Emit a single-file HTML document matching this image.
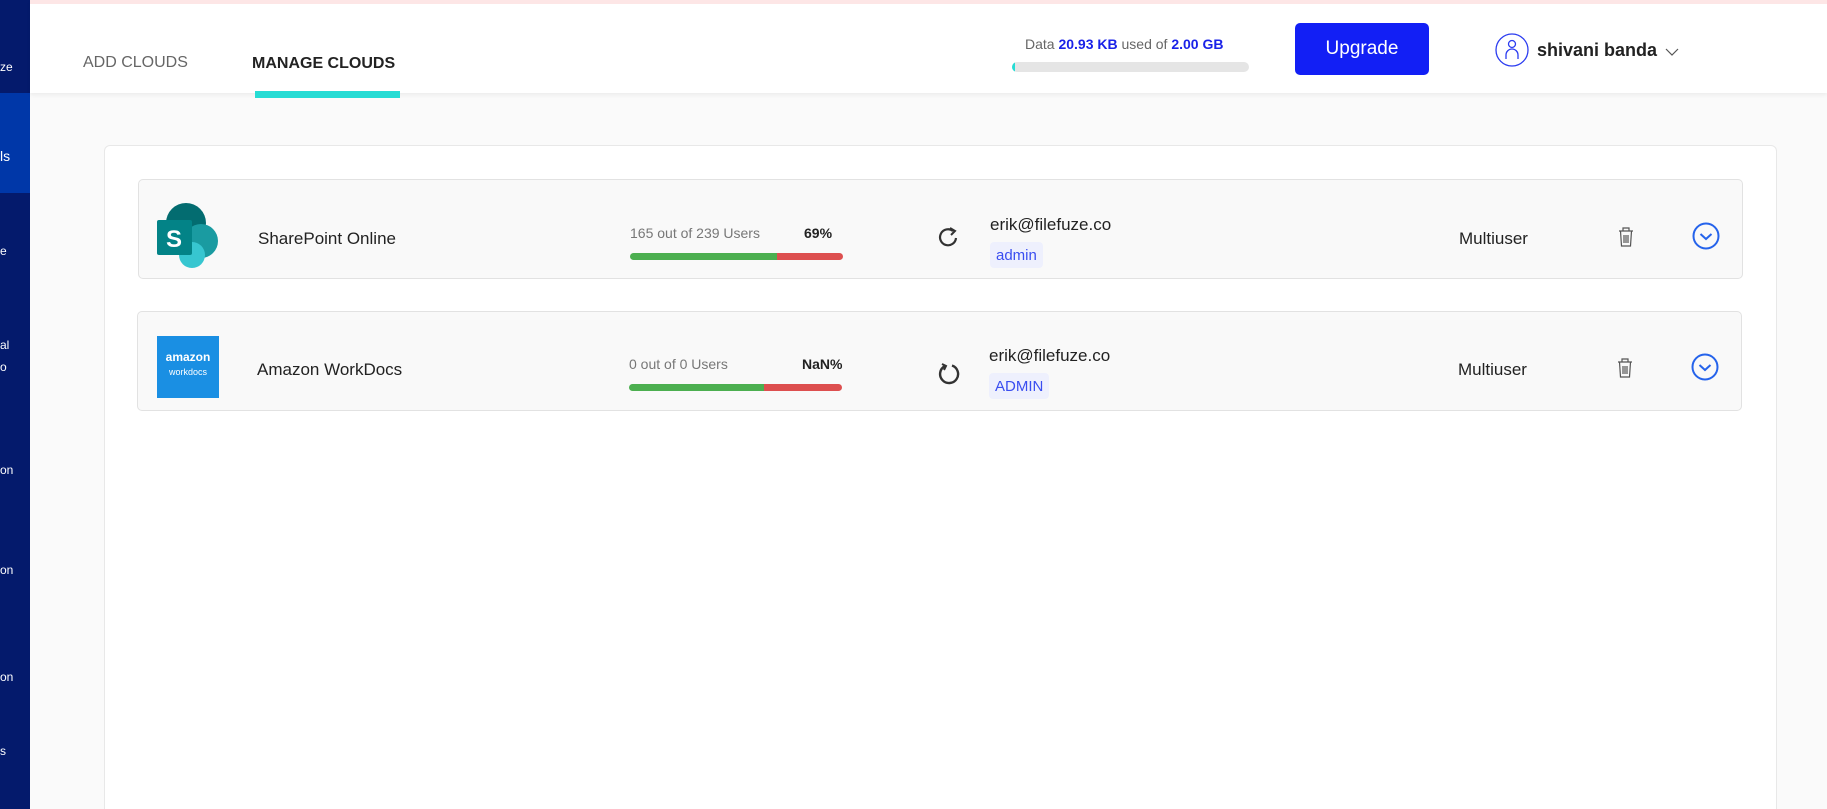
<!DOCTYPE html>
<html><head><meta charset="utf-8"><style>
*{margin:0;padding:0;box-sizing:border-box}
html{width:1827px;height:809px;overflow:hidden}
body{width:1827px;height:809px;overflow:hidden;background:#fafafa;font-family:"Liberation Sans",sans-serif;color:#222;position:relative}
.abs{position:absolute}
.side{left:0;top:0;width:30px;height:809px;background:#041a6c}
.hdr{left:30px;top:0;width:1797px;height:93px;background:#fff;border-top:4px solid #fde6e6;box-shadow:0 2px 4px rgba(0,0,0,.06)}
.row{background:#f9f9f9;border:1px solid #e2e2e2;border-radius:5px;width:1605px;height:100px}
.t{white-space:nowrap}
.bar{height:7px;border-radius:4px;overflow:hidden;display:flex}
.badge{background:#eef0fd;color:#3a4ef0;border-radius:4px;font-size:15px;padding:5px 6px;height:26px}
</style></head><body>
<div class="abs side"></div>
<div class="abs" style="left:0;top:93px;width:30px;height:100px;background:#0037a8"></div>
<div class="abs t" style="left:0;top:60px;color:#fff;font-size:12px">ze</div>
<div class="abs t" style="left:0;top:148px;color:#fff;font-size:14px">ls</div>
<div class="abs t" style="left:0;top:244px;color:#fff;font-size:12px">e</div>
<div class="abs t" style="left:0;top:338px;color:#fff;font-size:12px">al</div>
<div class="abs t" style="left:0;top:360px;color:#fff;font-size:12px">o</div>
<div class="abs t" style="left:0;top:463px;color:#fff;font-size:12px">on</div>
<div class="abs t" style="left:0;top:563px;color:#fff;font-size:12px">on</div>
<div class="abs t" style="left:0;top:670px;color:#fff;font-size:12px">on</div>
<div class="abs t" style="left:0;top:744px;color:#fff;font-size:12px">s</div>
<div class="abs hdr"></div>
<div class="abs t" style="left:83px;top:54px;font-size:16px;color:#666">ADD CLOUDS</div>
<div class="abs t" style="left:252px;top:55px;font-size:16px;font-weight:bold;color:#222">MANAGE CLOUDS</div>
<div class="abs" style="left:255px;top:91px;width:145px;height:7px;background:#26dcd4"></div>
<div class="abs t" style="left:1025px;top:36px;font-size:14px;color:#666">Data <b style="color:#1a22e8">20.93 KB</b> used of <b style="color:#1a22e8">2.00 GB</b></div>
<div class="abs" style="left:1012px;top:62px;width:237px;height:10px;background:#e5e5e5;border-radius:5px;overflow:hidden"><div style="width:3px;height:10px;background:#26dcd4"></div></div>
<div class="abs" style="left:1295px;top:23px;width:134px;height:52px;background:#121ff5;border-radius:5px;color:#fff;font-size:19px;display:flex;align-items:center;justify-content:center">Upgrade</div>
<svg class="abs" style="left:1495px;top:33px" width="34" height="34" viewBox="0 0 34 34"><circle cx="17" cy="17" r="16" fill="none" stroke="#2b3cf0" stroke-width="1.3"/><circle cx="17" cy="11" r="3.5" fill="none" stroke="#2b3cf0" stroke-width="1.3"/><path d="M11 26 V22 a6 6 0 0 1 12 0 V26" fill="none" stroke="#2b3cf0" stroke-width="1.3"/></svg>
<div class="abs t" style="left:1537px;top:40px;font-size:18px;font-weight:bold;color:#222">shivani banda</div>
<svg class="abs" style="left:1665px;top:47px" width="14" height="10"><path d="M1 2 L7 8 L13 2" fill="none" stroke="#555" stroke-width="1.2"/></svg>

<div class="abs" style="left:104px;top:145px;width:1673px;height:670px;background:#fff;border:1px solid #e8e8e8;border-radius:6px"></div>

<div class="abs row" style="left:138px;top:179px"></div>
<svg class="abs" style="left:155px;top:202px" width="70" height="70" viewBox="0 0 70 70"><circle cx="31" cy="21" r="20" fill="#036c70"/><circle cx="46" cy="39" r="17" fill="#1a9ba1"/><circle cx="37" cy="53" r="13" fill="#37c6d0"/><rect x="2" y="18" width="35" height="35" rx="2" fill="#038387"/><text x="19" y="45" fill="#fff" font-size="24" font-family="Liberation Sans" font-weight="bold" text-anchor="middle">S</text></svg>
<div class="abs t" style="left:258px;top:229px;font-size:17px">SharePoint Online</div>
<div class="abs t" style="left:630px;top:225px;font-size:14px;color:#777">165 out of 239 Users</div>
<div class="abs t" style="left:804px;top:225px;font-size:14px;font-weight:bold">69%</div>
<div class="abs bar" style="left:630px;top:253px;width:213px"><div style="width:147px;background:#4caf50"></div><div style="flex:1;background:#dd4f4f"></div></div>
<svg class="abs" style="left:936px;top:226px" width="24" height="22" viewBox="0 0 24 22"><path d="M17 5 A8 8 0 1 0 20 12" fill="none" stroke="#333" stroke-width="2.2"/><path d="M14 2 L19 5 L15 9" fill="none" stroke="#333" stroke-width="2"/></svg>
<div class="abs t" style="left:990px;top:215px;font-size:17px">erik@filefuze.co</div>
<div class="abs badge" style="left:990px;top:242px">admin</div>
<div class="abs t" style="left:1459px;top:229px;font-size:17px">Multiuser</div>
<svg class="abs" style="left:1617px;top:226px" width="18" height="22" viewBox="0 0 18 22"><path d="M2 5 H16 M6 5 V2 H12 V5 M3.5 5 L4.5 20 H13.5 L14.5 5 M7 9 V17 M9 9 V17 M11 9 V17" fill="none" stroke="#555" stroke-width="1.2"/></svg>
<svg class="abs" style="left:1692px;top:222px" width="28" height="28" viewBox="0 0 28 28"><circle cx="14" cy="14" r="12.5" fill="none" stroke="#2563eb" stroke-width="2"/><path d="M8.5 12 L14 17 L19.5 12" fill="none" stroke="#2563eb" stroke-width="2"/></svg>

<div class="abs row" style="left:137px;top:311px"></div>
<div class="abs" style="left:157px;top:336px;width:62px;height:62px;background:#1a8fe3;color:#fff;text-align:center">
<div style="font-size:12px;margin-top:14px;font-weight:bold">amazon</div><div style="font-size:9px;margin-top:3px">workdocs</div></div>
<div class="abs t" style="left:257px;top:360px;font-size:17px">Amazon WorkDocs</div>
<div class="abs t" style="left:629px;top:356px;font-size:14px;color:#777">0 out of 0 Users</div>
<div class="abs t" style="left:802px;top:356px;font-size:14px;font-weight:bold">NaN%</div>
<div class="abs bar" style="left:629px;top:384px;width:213px"><div style="width:135px;background:#4caf50"></div><div style="flex:1;background:#dd4f4f"></div></div>
<svg class="abs" style="left:937px;top:362px" width="24" height="24" viewBox="0 0 24 24"><path d="M8 4 A9 9 0 1 0 15 3.5" fill="none" stroke="#333" stroke-width="2.4"/><path d="M5 2 L9 4 L7 8" fill="none" stroke="#333" stroke-width="2"/></svg>
<div class="abs t" style="left:989px;top:346px;font-size:17px">erik@filefuze.co</div>
<div class="abs badge" style="left:989px;top:373px">ADMIN</div>
<div class="abs t" style="left:1458px;top:360px;font-size:17px">Multiuser</div>
<svg class="abs" style="left:1616px;top:357px" width="18" height="22" viewBox="0 0 18 22"><path d="M2 5 H16 M6 5 V2 H12 V5 M3.5 5 L4.5 20 H13.5 L14.5 5 M7 9 V17 M9 9 V17 M11 9 V17" fill="none" stroke="#555" stroke-width="1.2"/></svg>
<svg class="abs" style="left:1691px;top:353px" width="28" height="28" viewBox="0 0 28 28"><circle cx="14" cy="14" r="12.5" fill="none" stroke="#2563eb" stroke-width="2"/><path d="M8.5 12 L14 17 L19.5 12" fill="none" stroke="#2563eb" stroke-width="2"/></svg>
</body></html>
